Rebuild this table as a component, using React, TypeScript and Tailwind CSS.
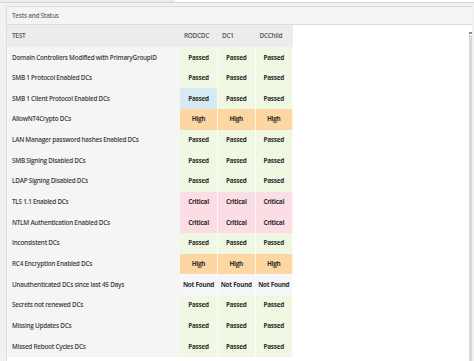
import React from 'react';

type Status = 'Passed' | 'PassedInfo' | 'High' | 'Critical' | 'Not Found';

const rows: { name: string; values: Status[] }[] = [
  { name: 'Domain Controllers Modified with PrimaryGroupID', values: ['Passed', 'Passed', 'Passed'] },
  { name: 'SMB 1 Protocol Enabled DCs', values: ['Passed', 'Passed', 'Passed'] },
  { name: 'SMB 1 Client Protocol Enabled DCs', values: ['PassedInfo', 'Passed', 'Passed'] },
  { name: 'AllowNT4Crypto DCs', values: ['High', 'High', 'High'] },
  { name: 'LAN Manager password hashes Enabled DCs', values: ['Passed', 'Passed', 'Passed'] },
  { name: 'SMB Signing Disabled DCs', values: ['Passed', 'Passed', 'Passed'] },
  { name: 'LDAP Signing Disabled DCs', values: ['Passed', 'Passed', 'Passed'] },
  { name: 'TLS 1.1 Enabled DCs', values: ['Critical', 'Critical', 'Critical'] },
  { name: 'NTLM Authentication Enabled DCs', values: ['Critical', 'Critical', 'Critical'] },
  { name: 'Inconsistent DCs', values: ['Passed', 'Passed', 'Passed'] },
  { name: 'RC4 Encryption Enabled DCs', values: ['High', 'High', 'High'] },
  { name: 'Unauthenticated DCs since last 45 Days', values: ['Not Found', 'Not Found', 'Not Found'] },
  { name: 'Secrets not renewed DCs', values: ['Passed', 'Passed', 'Passed'] },
  { name: 'Missing Updates DCs', values: ['Passed', 'Passed', 'Passed'] },
  { name: 'Missed Reboot Cycles DCs', values: ['Passed', 'Passed', 'Passed'] },
];

const cellStyle: Record<Status, string> = {
  Passed: 'bg-[#f0f7e3]',
  PassedInfo: 'bg-[#d5eaf3]',
  High: 'bg-[#fcd7a3]',
  Critical: 'bg-[#fadde5]',
  'Not Found': 'bg-[#f5f7fb]',
};

const StatusCell = ({ value }: { value: Status }) => (
  <div className={`flex items-center justify-center border-r border-white/70 font-bold text-[#2e2e2e] ${cellStyle[value]}`}>
    {value === 'PassedInfo' ? 'Passed' : value}
  </div>
);

const App = () => {
  return (
    <div
      className="w-[474px] h-[361px] overflow-hidden bg-[#f1f1f1] text-[6.4px] tracking-[-0.25px]"
      style={{ fontFamily: '"Open Sans", "Liberation Sans", sans-serif' }}
    >
      <div className="h-[3px] flex border-b border-[#d6d6d6]">
        <div className="w-[175px] bg-[#ececec]"></div>
        <div className="flex-1 bg-white"></div>
      </div>
      <div className="h-[3px]"></div>
      <div className="ml-[6px] mr-[2px] border-l border-t border-[#dedede] bg-white">
        <div className="h-[18px] flex items-center pl-[5px] bg-[#f4f4f5] border-b border-[#dcdcdc] text-[#6b6b6b] font-semibold">
          Tests and Status
        </div>
        <div className="flex">
          <div className="w-[286px]">
            <div className="grid grid-cols-[173px_38px_37.5px_37.5px] h-[22px] bg-[#ececec] text-[#555] font-semibold">
              <div className="flex items-center pl-[5px]">TEST</div>
              <div className="flex items-center pl-[4px]">RODCDC</div>
              <div className="flex items-center pl-[4px]">DC1</div>
              <div className="flex items-center pl-[4px]">DCChild</div>
            </div>
            {rows.map((row) => (
              <div key={row.name} className="grid grid-cols-[173px_38px_37.5px_37.5px] h-[20.67px]">
                <div className="flex items-center pl-[5px] bg-[#f5f5f5] text-[#404040] font-semibold">{row.name}</div>
                {row.values.map((v, i) => (
                  <StatusCell key={i} value={v} />
                ))}
              </div>
            ))}
          </div>
          <div className="flex-1 bg-white"></div>
          <div className="w-[3px] pt-[7px]">
            <div className="h-[2px] w-[3px] bg-[#8a8a8a]"></div>
            <div className="mt-[1px] h-[330px] w-[3px] bg-[#d8d8d8]"></div>
          </div>
        </div>
      </div>
    </div>
  );
};

export default App;
